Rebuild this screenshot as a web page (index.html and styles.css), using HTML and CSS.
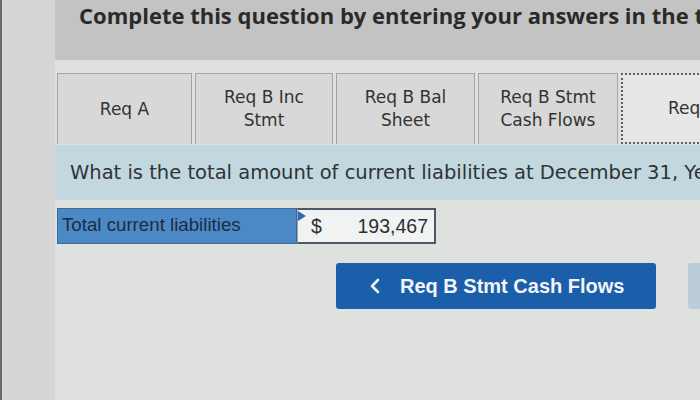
FILE: index.html
```html
<!DOCTYPE html>
<html>
<head>
<meta charset="utf-8">
<link rel="stylesheet" href="styles.css">
</head>
<body>
<div class="page">
  <div class="gutter"></div>
  <div class="main">
    <div class="header">Complete this question by entering your answers in the tabs below.</div>
    <div class="tabs">
      <div class="tab t1">Req A</div>
      <div class="tab t2">Req B Inc<br>Stmt</div>
      <div class="tab t3">Req B Bal<br>Sheet</div>
      <div class="tab t4">Req B Stmt<br>Cash Flows</div>
      <div class="tab active">Req C</div>
    </div>
    <div class="question">What is the total amount of current liabilities at December 31, Year 2?</div>
    <div class="answer">
      <div class="label">Total current liabilities</div>
      <div class="input"><span class="flag"></span><span class="cur">$</span><span class="val">193,467</span></div>
    </div>
    <div class="nav">
      <div class="btn prev"><svg class="chev" width="12" height="16" viewBox="0 0 12 16"><path d="M9 2 L3 8 L9 14" fill="none" stroke="#f2f5fa" stroke-width="2.6" stroke-linecap="round" stroke-linejoin="round"/></svg>Req B Stmt Cash Flows</div>
      <div class="btn next">Req C</div>
    </div>
  </div>
</div>
</body>
</html>
```
FILE: styles.css
```css
html, body {
  margin: 0;
  padding: 0;
  width: 700px;
  height: 400px;
  overflow: hidden;
  background: #dfe1df;
}
.page {
  display: flex;
  height: 400px;
}
.gutter {
  width: 53px;
  flex: none;
  border-left: 2px solid #6b6b6b;
  background: #d4d5d4;
}
.main {
  flex: 1;
  min-width: 0;
  display: flex;
  flex-direction: column;
  overflow: hidden;
}
.header {
  height: 60px;
  background: #c2c3c2;
  padding-left: 24px;
  font-family: "Open Sans", "DejaVu Sans", sans-serif;
  font-weight: 700;
  font-size: 22px;
  line-height: 30px;
  color: #2a2a2a;
  white-space: nowrap;
  overflow: hidden;
  box-sizing: border-box;
}
.tabs {
  display: flex;
  gap: 3px;
  margin: 13px 0 0 2px;
  height: 71px;
}
.tab {
  flex: none;
  box-sizing: border-box;
  border: 1px solid #a3a5a3;
  border-bottom: none;
  background: #d7d8d7;
  display: flex;
  align-items: center;
  justify-content: center;
  text-align: center;
  font-family: "DejaVu Sans", Verdana, sans-serif;
  font-size: 17px;
  line-height: 23px;
  color: #333;
}
.t1 { width: 135px; }
.t2 { width: 138px; }
.t3 { width: 139px; }
.t4 { width: 140px; }
.tab.active {
  width: 110px;
  background: #e6e7e6;
  border: 2px dotted #556070;
  justify-content: flex-start;
  padding-left: 45px;
}
.question {
  margin-top: 1px;
  height: 55px;
  background: #c2d7de;
  padding-left: 15px;
  font-family: "DejaVu Sans", Verdana, sans-serif;
  font-size: 19.5px;
  line-height: 56px;
  color: #2e3338;
  white-space: nowrap;
  overflow: hidden;
}
.answer {
  display: flex;
  margin: 8px 0 0 2px;
  height: 36px;
}
.label {
  width: 240px;
  box-sizing: border-box;
  background: #4b88c6;
  border: 1px solid #3d6a96;
  padding-left: 4px;
  font-family: "Liberation Sans", Arial, sans-serif;
  font-size: 18.7px;
  line-height: 32px;
  color: #1d2d40;
  white-space: nowrap;
}
.input {
  position: relative;
  width: 139px;
  box-sizing: border-box;
  background: #f1f3f3;
  border: 2px solid #4c5866;
  border-left: 1px solid #9aa4ae;
  display: flex;
  align-items: center;
  justify-content: space-between;
  padding: 0 6px 0 13px;
  font-family: "Liberation Sans", Arial, sans-serif;
  font-size: 19.5px;
  color: #2a2f35;
}
.flag {
  position: absolute;
  left: 0;
  top: 1px;
  width: 0;
  height: 0;
  border-top: 5px solid transparent;
  border-bottom: 5px solid transparent;
  border-left: 8px solid #2e6bb0;
}
.nav {
  display: flex;
  margin: 19px 0 0 281px;
  gap: 32px;
}
.btn {
  flex: none;
  height: 46px;
  box-sizing: border-box;
  border-radius: 3px;
  font-family: "Liberation Sans", Arial, sans-serif;
  font-weight: 700;
  font-size: 20px;
  color: #f2f5fa;
  display: flex;
  align-items: center;
}
.prev {
  width: 320px;
  background: #1b5ea9;
  padding-left: 33px;
}
.chev {
  margin-right: 19px;
}
.next {
  width: 120px;
  background: #bccdda;
  color: #bccdda;
}
```
